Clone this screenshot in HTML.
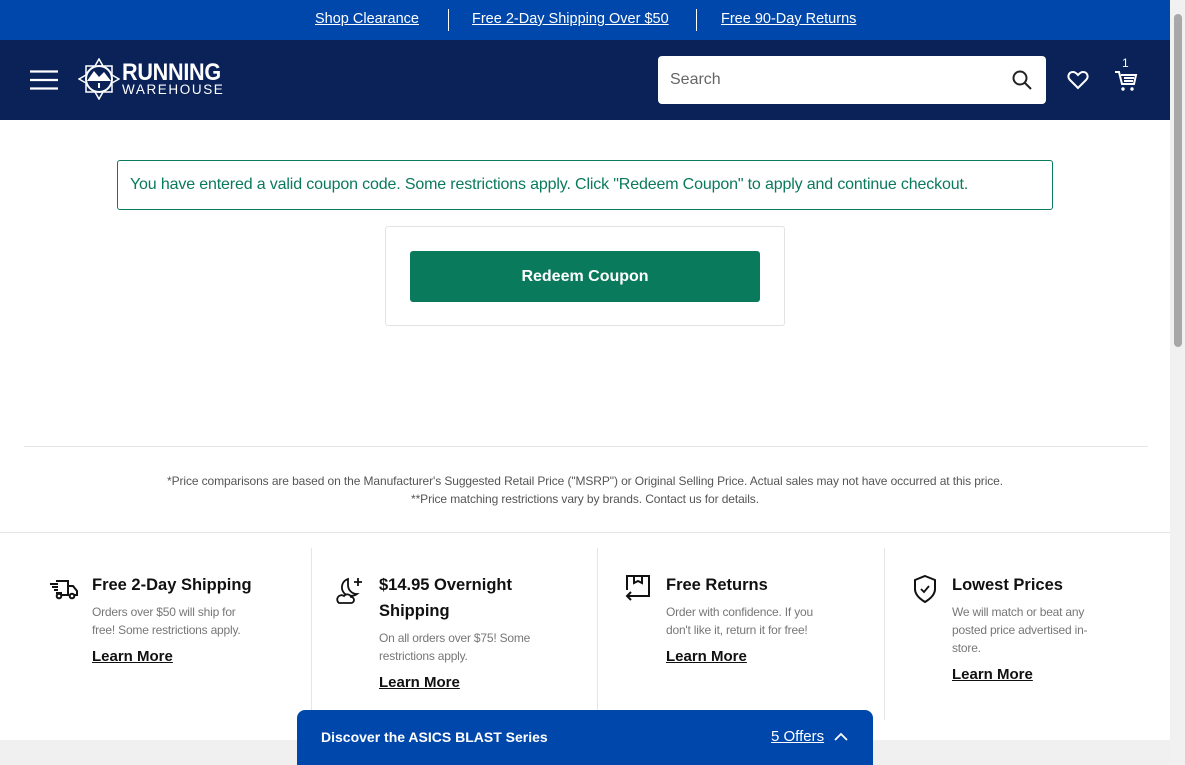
<!DOCTYPE html>
<html><head><meta charset="utf-8"><style>
*{box-sizing:border-box;margin:0;padding:0}
body{width:1185px;height:765px;overflow:hidden;font-family:"Liberation Sans",Arial,sans-serif;background:#fff;position:relative}
.top{position:absolute;left:0;top:0;width:1170px;height:40px;background:#0047ab;color:#fff;font-size:14.5px}
.top a{position:absolute;top:11px;color:#fff;text-decoration:underline}
.top .sep{position:absolute;top:9px;width:1px;height:22px;background:#fff}
.hdr{position:absolute;left:0;top:40px;width:1170px;height:80px;background:#0a2257}
.search{position:absolute;left:658px;top:16px;width:388px;height:48px;background:#fff;border-radius:4px}
.search span{position:absolute;left:12px;top:15px;color:#666;font-size:16px}
.alert{position:absolute;left:117px;top:160px;width:936px;height:50px;border:1px solid #0a7a5c;border-radius:3px;color:#0a7a5c;font-size:16px;letter-spacing:-0.15px;padding:15px 12px;white-space:nowrap}
.box{position:absolute;left:385px;top:226px;width:400px;height:100px;border:1px solid #e3e3e3;border-radius:3px}
.btn{position:absolute;left:24px;top:24px;width:350px;height:51px;background:#0a7a5c;border-radius:3px;color:#fff;font-weight:bold;font-size:16px;text-align:center;line-height:51px}
.hr{position:absolute;left:24px;top:446px;width:1124px;height:1px;background:#e5e5e5}
.disc{position:absolute;left:0;width:1170px;text-align:center;font-size:12px;color:#555;letter-spacing:-0.1px}
.hr2{position:absolute;left:0;top:532px;width:1170px;height:1px;background:#e5e5e5}
.col{position:absolute;top:548px;height:172px;border-left:1px solid #e5e5e5}
.f{position:absolute}
.f h3{font-size:16.5px;font-weight:bold;color:#111;line-height:26px}
.f p{font-size:12px;color:#777;line-height:18px;margin-top:5px;white-space:nowrap;letter-spacing:-0.2px}
.f a{display:block;margin-top:9px;font-size:15px;font-weight:bold;color:#111;text-decoration:underline}
.ic{position:absolute}
.bottom{position:absolute;left:0;top:740px;width:1170px;height:25px;background:#f0f0f0}
.bar{position:absolute;left:297px;top:710px;width:576px;height:55px;background:#0047ab;border-radius:8px 8px 0 0;color:#fff}
.sb{position:absolute;left:1170px;top:0;width:15px;height:765px;background:#f1f1f1}
.thumb{position:absolute;left:1174px;top:14px;width:8px;height:333px;background:#a8a8a8;border-radius:4px}
</style></head><body>
<div class="top">
<a style="left:315px">Shop Clearance</a><div class="sep" style="left:448px"></div>
<a style="left:472px">Free 2-Day Shipping Over $50</a><div class="sep" style="left:696px"></div>
<a style="left:721px">Free 90-Day Returns</a>
</div>
<div class="hdr">
<svg class="ic" style="left:30px;top:30px" width="28" height="20"><path d="M0 1.5H28M0 10H28M0 18.5H28" stroke="#fff" stroke-width="2.2"/></svg>
<svg class="ic" style="left:78px;top:18px" width="42" height="42" viewBox="0 0 42 42"><path d="M21 1L25 8 34 8 34 17 41 21 34 25 34 34 25 34 21 41 17 34 8 34 8 25 1 21 8 17 8 8 17 8Z" fill="none" stroke="#fff" stroke-width="1.5"/><circle cx="21" cy="21" r="13" fill="none" stroke="#fff" stroke-width="2"/><path d="M9 23L16 13 21 19 26 14 33 23Z" fill="#fff"/><path d="M21 25v5" stroke="#fff" stroke-width="2"/></svg>
<div style="position:absolute;left:122px;top:20px;color:#fff;font-weight:bold;font-size:24px;letter-spacing:-0.3px;line-height:26px;transform:scaleX(0.9);transform-origin:left">RUNNING</div>
<div style="position:absolute;left:122px;top:42px;color:#fff;font-size:13.5px;letter-spacing:1.6px">WAREHOUSE</div>
<div class="search"><span>Search</span>
<svg class="ic" style="left:354px;top:14px" width="20" height="20"><circle cx="8" cy="8" r="6.5" fill="none" stroke="#222" stroke-width="2"/><path d="M13 13l6 6" stroke="#222" stroke-width="2"/></svg></div>
<svg class="ic" style="left:1067px;top:30px" width="22" height="20" viewBox="0 0 22 20"><path d="M11 18L3 10C0 7 1.5 2 6 2c2.5 0 4 2 5 3 1-1 2.5-3 5-3 4.5 0 6 5 3 8Z" fill="none" stroke="#fff" stroke-width="2"/></svg>
<div style="position:absolute;left:1122px;top:16px;color:#fff;font-size:12px">1</div>
<svg class="ic" style="left:1114px;top:30px" width="24" height="22" viewBox="0 0 24 22"><path d="M1 2h4l3 12h12l2-9H7M10 8h10M10 11h9" fill="none" stroke="#fff" stroke-width="2"/><circle cx="9" cy="19" r="1.7" fill="#fff"/><circle cx="18" cy="19" r="1.7" fill="#fff"/></svg>
</div>
<div class="alert">You have entered a valid coupon code. Some restrictions apply. Click "Redeem Coupon" to apply and continue checkout.</div>
<div class="box"><div class="btn">Redeem Coupon</div></div>
<div class="hr"></div>
<div class="disc" style="top:474px">*Price comparisons are based on the Manufacturer's Suggested Retail Price ("MSRP") or Original Selling Price. Actual sales may not have occurred at this price.</div>
<div class="disc" style="top:492px">**Price matching restrictions vary by brands. Contact us for details.</div>
<div class="hr2"></div>
<div class="col" style="left:311px"></div><div class="col" style="left:597px"></div><div class="col" style="left:884px"></div>
<svg class="ic" style="left:50px;top:578px" width="28" height="22" viewBox="0 0 28 22"><path d="M6 3h12v14H7M18 8h5l4 5v4h-3M0 6h8M2 9h6M4 12h4M6 15h6" fill="none" stroke="#111" stroke-width="2"/><circle cx="9" cy="18" r="2.3" fill="#fff" stroke="#111" stroke-width="2"/><circle cx="22" cy="18" r="2.3" fill="#fff" stroke="#111" stroke-width="2"/></svg>
<div class="f" style="left:92px;top:572px;width:200px"><h3>Free 2-Day Shipping</h3><p>Orders over $50 will ship for<br>free! Some restrictions apply.</p><a>Learn More</a></div>
<svg class="ic" style="left:336px;top:576px" width="30" height="30" viewBox="0 0 30 30"><path d="M12 3C6 5 4 12 8 17c3 3 9 4 13 1-5 0-9-4-9-9 0-2 0-4 0-6Z M22 2v8M18 6h8" fill="none" stroke="#111" stroke-width="1.8"/><path d="M3 27h12a3 3 0 000-6 4 4 0 00-7-1 3 3 0 00-5 7Z" fill="#fff" stroke="#111" stroke-width="1.8"/></svg>
<div class="f" style="left:379px;top:572px;width:200px"><h3>$14.95 Overnight<br>Shipping</h3><p>On all orders over $75! Some<br>restrictions apply.</p><a>Learn More</a></div>
<svg class="ic" style="left:624px;top:574px" width="28" height="30" viewBox="0 0 28 30"><path d="M3 16V2h22v20H11M10 2v7l4-2 4 2V2M11 22H3m4-4l-4 4 4 4" fill="none" stroke="#111" stroke-width="2"/></svg>
<div class="f" style="left:666px;top:572px;width:200px"><h3>Free Returns</h3><p>Order with confidence. If you<br>don't like it, return it for free!</p><a>Learn More</a></div>
<svg class="ic" style="left:912px;top:574px" width="26" height="30" viewBox="0 0 26 30"><path d="M13 2l10 4v9c0 6-5 10-10 13C8 25 3 21 3 15V6Z" fill="none" stroke="#111" stroke-width="2"/><path d="M9 15l3 3 5-6" fill="none" stroke="#111" stroke-width="1.8"/></svg>
<div class="f" style="left:952px;top:572px;width:150px"><h3>Lowest Prices</h3><p>We will match or beat any<br>posted price advertised in-<br>store.</p><a>Learn More</a></div>
<div class="bottom"></div>
<div class="bar"><div style="position:absolute;left:24px;top:19px;font-weight:bold;font-size:14px">Discover the ASICS BLAST Series</div>
<div style="position:absolute;left:474px;top:18px;font-size:15px;text-decoration:underline">5 Offers</div>
<svg class="ic" style="left:537px;top:21px" width="14" height="10"><path d="M1 9l6-6 6 6" fill="none" stroke="#fff" stroke-width="1.8"/></svg></div>
<div class="sb"></div><div class="thumb"></div>
</body></html>
